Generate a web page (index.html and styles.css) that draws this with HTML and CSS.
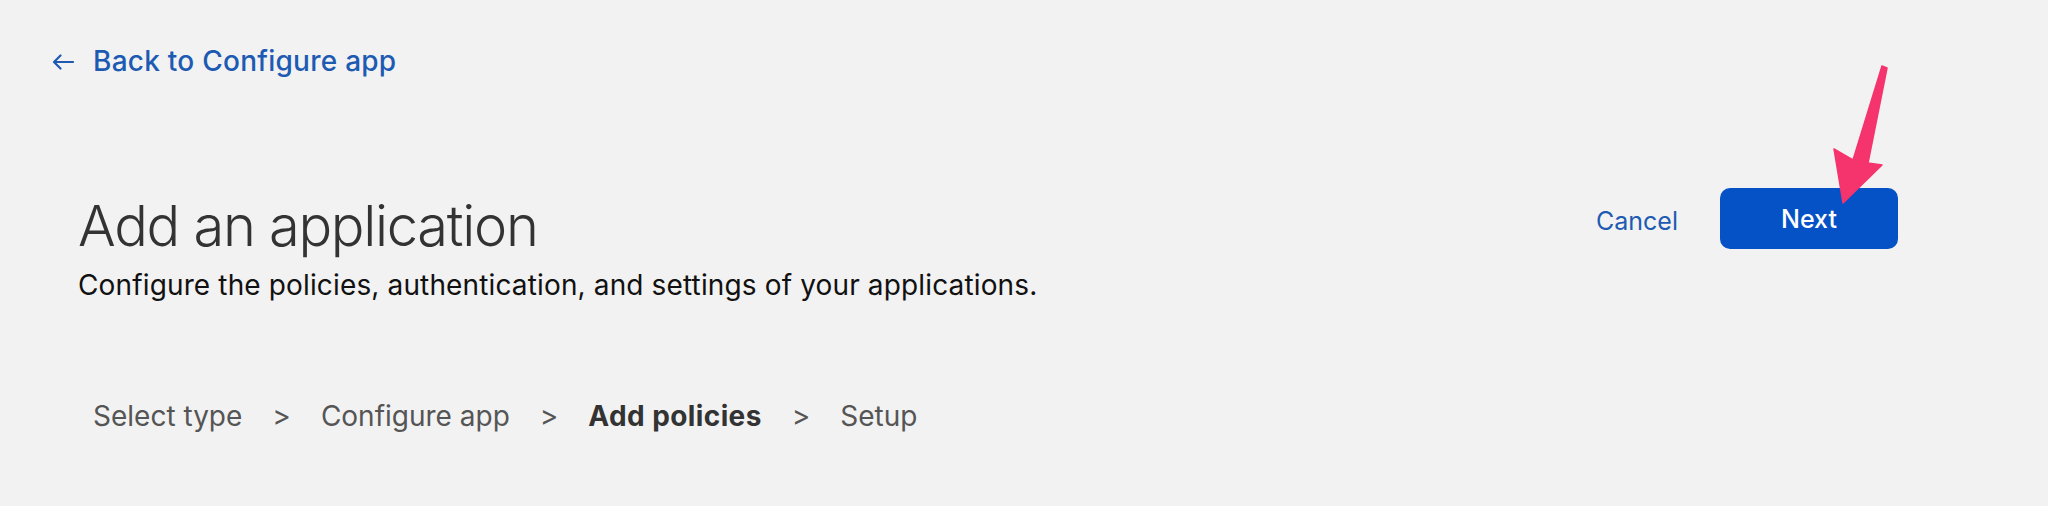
FILE: index.html
```html
<!DOCTYPE html>
<html lang="en">
<head>
<meta charset="utf-8">
<title>Add an application</title>
<link rel="stylesheet" href="styles.css">
</head>
<body>
<div class="page">
  <a class="back" href="#">
    <svg class="back-icon" viewBox="0 0 22 16" width="22" height="16" aria-hidden="true">
      <path d="M21 8H2M8.5 1.5L2 8l6.5 6.5" fill="none" stroke="currentColor" stroke-width="2.2" stroke-linecap="round" stroke-linejoin="round"/>
    </svg>
    <span>Back to Configure app</span>
  </a>

  <header class="head">
    <div class="titles">
      <h1 class="title">Add an application</h1>
      <p class="subtitle">Configure the policies, authentication, and settings of your applications.</p>
    </div>
    <div class="actions">
      <button class="btn-cancel" type="button">Cancel</button>
      <button class="btn-next" type="button">Next</button>
    </div>
  </header>

  <nav class="crumbs">
    <span class="crumb">Select type</span>
    <span class="sep">&gt;</span>
    <span class="crumb">Configure app</span>
    <span class="sep">&gt;</span>
    <span class="crumb crumb-active">Add policies</span>
    <span class="sep">&gt;</span>
    <span class="crumb">Setup</span>
  </nav>
</div>

<svg class="annot" viewBox="0 0 80 160" width="80" height="160" aria-hidden="true">
  <polygon points="62,11 67,13 48,108 62,110 23,148 14,94 33,105" fill="#f5336c" stroke="#f5336c" stroke-width="1.5" stroke-linejoin="round"/>
</svg>
</body>
</html>
```

FILE: styles.css
```css
* { box-sizing: border-box; }

html, body {
  margin: 0;
  padding: 0;
  background: #f2f2f2;
}

body {
  font-family: Inter, "Noto Sans", "Liberation Sans", sans-serif;
  width: 2048px;
  height: 506px;
  overflow: hidden;
  position: relative;
}

.page {
  padding: 45px 150px 0 52px;
}

.back {
  display: inline-flex;
  align-items: center;
  gap: 19px;
  color: #1d5bb3;
  text-decoration: none;
  font-size: 28px;
  font-weight: 500;
  line-height: 33px;
  letter-spacing: 0.25px;
}

.back-icon { display: block; }

.head {
  display: flex;
  justify-content: space-between;
  align-items: flex-start;
  margin-top: 113px;
  padding-left: 26px;
}

.title {
  margin: 0;
  font-size: 56px;
  font-weight: 300;
  line-height: 70px;
  color: #333333;
  letter-spacing: -1.3px;
}

.subtitle {
  margin: 8px 0 0;
  font-size: 28px;
  line-height: 33px;
  color: #111111;
  letter-spacing: 0.14px;
}

.actions {
  display: flex;
  align-items: center;
  gap: 42px;
  margin-top: -3px;
}

.btn-cancel {
  background: none;
  border: 0;
  padding: 4px 0 0;
  font-family: inherit;
  font-size: 25px;
  color: #1d5bb3;
}

.btn-next {
  width: 178px;
  height: 61px;
  border: 0;
  border-radius: 10px;
  background: #0552c6;
  color: #ffffff;
  font-family: inherit;
  font-size: 25px;
  font-weight: 500;
}

.crumbs {
  display: flex;
  align-items: center;
  gap: 30px;
  margin-top: 98px;
  padding-left: 41px;
  font-size: 28px;
  line-height: 33px;
  color: #555555;
}

.crumb-active {
  font-weight: 700;
  color: #333333;
  letter-spacing: 0.4px;
}

.annot {
  position: absolute;
  left: 1820px;
  top: 55px;
}
```
